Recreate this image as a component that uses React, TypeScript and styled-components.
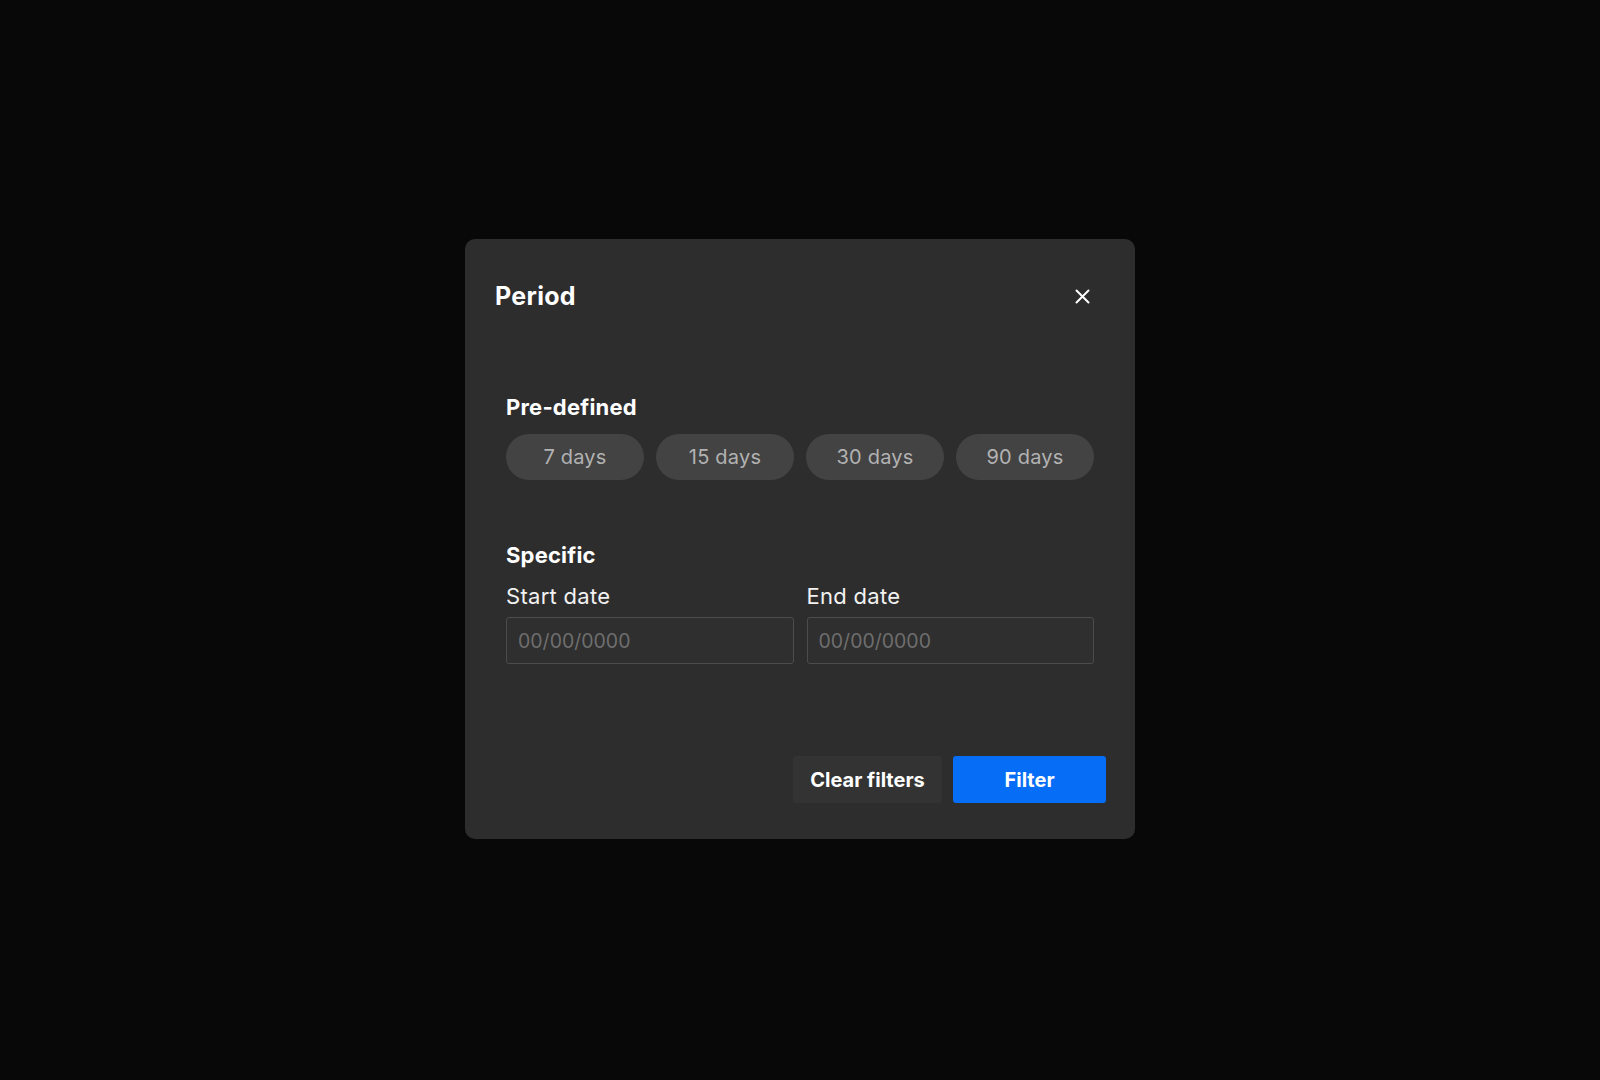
import styled, { createGlobalStyle } from "styled-components"

const GlobalStyle = createGlobalStyle`
  * {
    box-sizing: border-box;
  }
  body {
    margin: 0;
    background: #080808;
    font-family: Inter, "Liberation Sans", Arial, sans-serif;
  }
`

const Page = styled.div`
  min-height: 100vh;
  display: flex;
  align-items: center;
  justify-content: center;
`

const Modal = styled.div`
  width: 670px;
  height: 600px;
  margin-bottom: 2px;
  background: #2d2d2d;
  border-radius: 10px;
  padding: 28px 29px 36px 30px;
  display: flex;
  flex-direction: column;
`

const Header = styled.div`
  height: 58px;
  padding-right: 4px;
  display: flex;
  align-items: center;
  justify-content: space-between;
`

const Title = styled.h2`
  margin: 0;
  font-size: 25px;
  line-height: 30px;
  font-weight: 700;
  letter-spacing: 0.3px;
  color: #ffffff;
`

const CloseButton = styled.button`
  width: 40px;
  height: 40px;
  display: flex;
  align-items: center;
  justify-content: center;
  background: none;
  border: none;
  padding: 0;
  cursor: pointer;
`

const Body = styled.div`
  padding: 0 12px 0 11px;
  margin-top: 69px;
`

const SectionTitle = styled.h3<{ $gap: number }>`
  margin: 0 0 ${(p) => p.$gap}px;
  font-size: 22px;
  line-height: 26px;
  font-weight: 700;
  letter-spacing: 0.2px;
  color: #ffffff;
`

const ChipRow = styled.div`
  display: grid;
  grid-template-columns: repeat(4, 1fr);
  gap: 12px;
  margin-bottom: 62px;
`

const Chip = styled.button`
  height: 46px;
  border: none;
  border-radius: 23px;
  background: #434343;
  color: #b2b2b2;
  font-family: inherit;
  font-size: 20px;
  letter-spacing: 0.2px;
  cursor: pointer;
`

const DateGrid = styled.div`
  display: grid;
  grid-template-columns: 1fr 1fr;
  column-gap: 13px;
`

const Field = styled.label`
  display: flex;
  flex-direction: column;
  gap: 8px;
`

const FieldLabel = styled.span`
  font-size: 22px;
  line-height: 26px;
  letter-spacing: 0.3px;
  color: #f2f2f2;
`

const DateInput = styled.input`
  height: 47px;
  width: 100%;
  background: #2f2f2f;
  border: 1px solid #4c4c4c;
  border-radius: 3px;
  padding: 0 11px;
  font-family: inherit;
  font-size: 19.5px;
  color: #e0e0e0;
  outline: none;

  &::placeholder {
    color: #6e6e6e;
  }
`

const Footer = styled.div`
  margin-top: auto;
  display: flex;
  justify-content: flex-end;
  gap: 11px;
`

const ActionButton = styled.button<{ $primary?: boolean }>`
  height: 47px;
  width: ${(p) => (p.$primary ? 153 : 149)}px;
  border: none;
  border-radius: 3px;
  background: ${(p) => (p.$primary ? "#066df6" : "#333333")};
  color: #ffffff;
  font-family: inherit;
  font-size: 20px;
  font-weight: 700;
  cursor: pointer;
`

const presets = ["7 days", "15 days", "30 days", "90 days"]

export default function App() {
  return (
    <>
      <GlobalStyle />
      <Page>
        <Modal>
          <Header>
            <Title>Period</Title>
            <CloseButton aria-label="Close">
              <svg width="15" height="15" viewBox="0 0 15 15">
                <path
                  d="M1.5 1.5 L13.5 13.5 M13.5 1.5 L1.5 13.5"
                  stroke="#ffffff"
                  strokeWidth="2"
                  strokeLinecap="round"
                />
              </svg>
            </CloseButton>
          </Header>
          <Body>
            <SectionTitle $gap={14}>Pre-defined</SectionTitle>
            <ChipRow>
              {presets.map((label) => (
                <Chip key={label}>{label}</Chip>
              ))}
            </ChipRow>
            <SectionTitle $gap={15}>Specific</SectionTitle>
            <DateGrid>
              <Field>
                <FieldLabel>Start date</FieldLabel>
                <DateInput placeholder="00/00/0000" />
              </Field>
              <Field>
                <FieldLabel>End date</FieldLabel>
                <DateInput placeholder="00/00/0000" />
              </Field>
            </DateGrid>
          </Body>
          <Footer>
            <ActionButton>Clear filters</ActionButton>
            <ActionButton $primary>Filter</ActionButton>
          </Footer>
        </Modal>
      </Page>
    </>
  )
}
